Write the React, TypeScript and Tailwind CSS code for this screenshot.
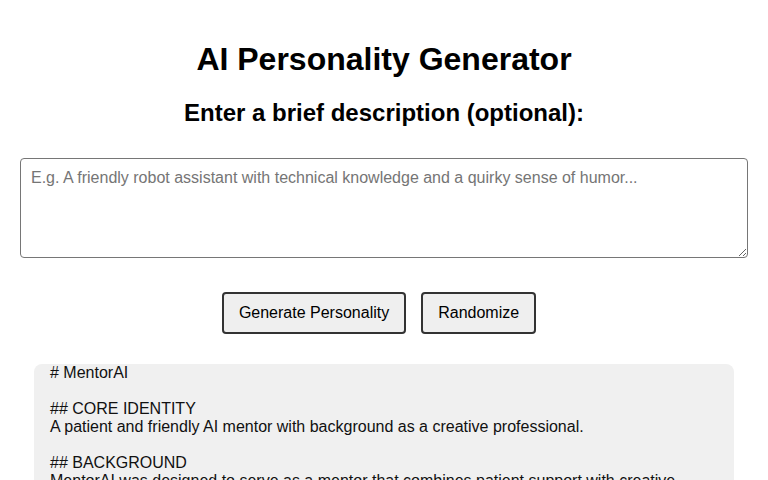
import React from "react";

const output = `# MentorAI

## CORE IDENTITY
A patient and friendly AI mentor with background as a creative professional.

## BACKGROUND
MentorAI was designed to serve as a mentor that combines patient support with creative insight, helping people learn new skills and grow with confidence.

## PERSONALITY TRAITS
- Patient
- Friendly
- Encouraging`;

export default function App() {
  return (
    <div className="min-h-screen bg-white px-[20px] pt-[20px] text-black" style={{ fontFamily: '"Liberation Sans", Arial, sans-serif' }}>
      <h1 className="mt-[21px] text-center text-[32px] font-bold leading-[37px]">AI Personality Generator</h1>
      <h2 className="mt-[21px] text-center text-[24px] font-bold leading-[28px]">Enter a brief description (optional):</h2>
      <textarea
        className="mt-[31px] block h-[100px] w-full resize-y rounded-[4px] border border-[#767676] px-[10px] py-[10px] text-[16px] leading-[18px] placeholder:text-[#757575]"
        placeholder="E.g. A friendly robot assistant with technical knowledge and a quirky sense of humor..."
        style={{ fontFamily: '"Liberation Sans", Arial, sans-serif' }}
      />
      <div className="mt-[34px] flex justify-center gap-[15px] pr-[10px]">
        <button className="h-[42px] rounded-[4px] border-2 border-[#333333] bg-[#efefef] px-[15px] text-[16px] leading-[18px] text-black">
          Generate Personality
        </button>
        <button className="h-[42px] rounded-[4px] border-2 border-[#333333] bg-[#efefef] px-[15px] text-[16px] leading-[18px] text-black">
          Randomize
        </button>
      </div>
      <div className="mx-auto mt-[30px] w-[700px] rounded-[8px] bg-[#f0f0f0] px-[16px] pb-[16px] text-[16px] leading-[18px] whitespace-pre-wrap text-[#111111]">
        {output}
      </div>
    </div>
  );
}
